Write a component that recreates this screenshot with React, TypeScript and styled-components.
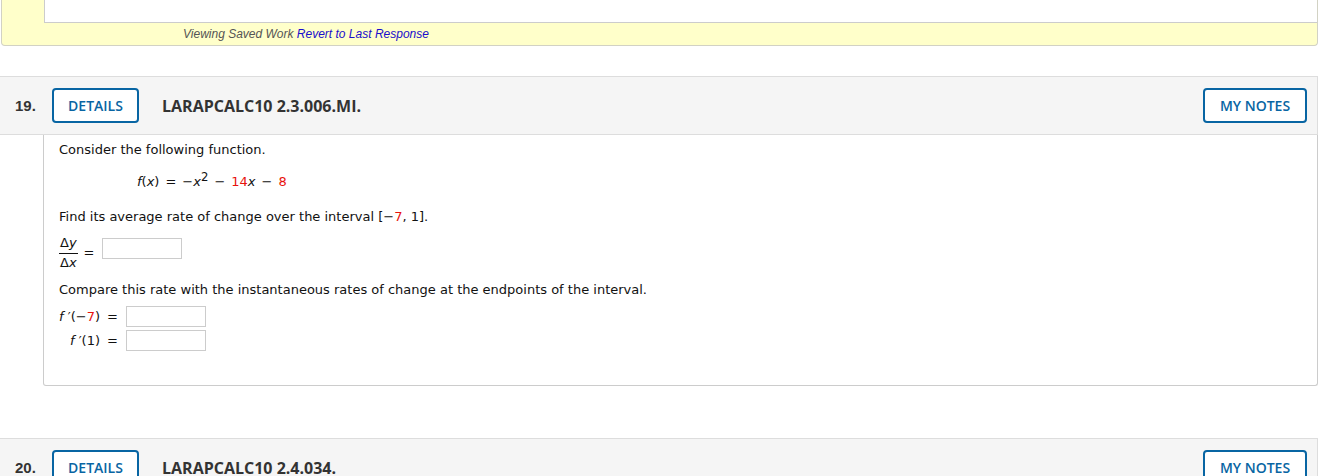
import styled, {createGlobalStyle} from "styled-components";

const GlobalStyle = createGlobalStyle`
body {
    margin: 0;
    background: #fff;
    font-family: "Open Sans", "Liberation Sans", sans-serif;
}
`;

const Page = styled.div`
    width: 1318px;
`;

const SavedPanel = styled.div`
    margin-left: 1px;
    background: #ffffca;
    border: 1px solid #d2d2c4;
    border-top: none;
    border-radius: 0 0 4px 4px;
`;

const AnswerBox = styled.div`
    margin-left: 42px;
    height: 22px;
    background: #fff;
    border-left: 1px solid #ccc;
    border-bottom: 1px solid #ccc;
`;

const SavedNote = styled.div`
    height: 22px;
    line-height: 23px;
    padding-left: 181px;
    font-family: "Liberation Sans", Arial, sans-serif;
    font-style: italic;
    font-size: 12px;
    color: #555;
    a {
        color: #1a0dcc;
        text-decoration: none;
    }
`;

const Question = styled.section<{$gap: number}>`
    margin-top: ${p => p.$gap}px;
`;

const Header = styled.div`
    display: flex;
    align-items: center;
    height: 57px;
    padding: 0 10px 0 15px;
    background: #f5f5f5;
    border-top: 1px solid #ddd;
    border-right: 1px solid #ddd;
    border-bottom: 1px solid #ddd;
`;

const Number = styled.span`
    width: 37px;
    font-family: "Liberation Sans", Arial, sans-serif;
    font-weight: bold;
    font-size: 15px;
    color: #333;
`;

const OutlineButton = styled.button<{$w: number}>`
    width: ${p => p.$w}px;
    height: 35px;
    padding: 0;
    background: #fff;
    border: 2px solid #0865a3;
    border-radius: 4px;
    color: #0865a3;
    font-family: "Open Sans", sans-serif;
    font-weight: 600;
    font-size: 14px;
    cursor: pointer;
`;

const Title = styled.span`
    margin-left: 23px;
    flex: 1;
    font-family: "Open Sans", sans-serif;
    font-weight: 700;
    font-size: 16px;
    color: #333;
`;

const Body = styled.div`
    margin-left: 43px;
    padding: 6px 15px 34px;
    border-left: 1px solid #ccc;
    border-right: 1px solid #ccc;
    border-bottom: 1px solid #ccc;
    border-radius: 0 0 3px 3px;
    font-family: "DejaVu Sans", Verdana, sans-serif;
    font-size: 13px;
    color: #111;
`;

const Line = styled.div<{$top?: number; $indent?: number}>`
    line-height: 18px;
    margin-top: ${p => p.$top ?? 0}px;
    padding-left: ${p => p.$indent ?? 0}px;
`;

const Red = styled.span`
    color: #e8120c;
`;

const Op = styled.span`
    padding: 0 6px;
`;

const It = styled.i`
    font-style: italic;
`;

const Sup = styled.sup`
    font-size: 0.9em;
    line-height: 0;
`;

const FracRow = styled.div`
    display: flex;
    align-items: flex-start;
    margin-top: 8px;
`;

const Fraction = styled.span`
    display: inline-flex;
    flex-direction: column;
    align-items: center;
    line-height: 18px;
    span:first-child {
        border-bottom: 1px solid #111;
        padding: 0 1px 1px;
    }
`;

const Input = styled.span`
    display: inline-block;
    width: 78px;
    height: 19px;
    border: 1px solid #ccc;
    background: #fff;
`;

const FracInput = styled(Input)`
    margin-top: 4px;
`;

const FracEq = styled.span`
    padding: 0 7px 0 6px;
    margin-top: 10px;
    line-height: 18px;
`;

const EqTable = styled.div`
    display: grid;
    grid-template-columns: auto auto auto;
    justify-content: start;
    align-items: center;
    row-gap: 3px;
    margin-top: 7px;
`;

const Label = styled.span`
    text-align: right;
`;

const Eq = styled.span`
    padding: 0 8px 0 7px;
`;

function QuestionHeader({num, code}: {num: number; code: string}) {
    return <Header>
        <Number>{num}.</Number>
        <OutlineButton $w={87}>DETAILS</OutlineButton>
        <Title>{code}</Title>
        <OutlineButton $w={104}>MY NOTES</OutlineButton>
    </Header>;
}

export default function App() {
    return <Page>
        <GlobalStyle />
        <SavedPanel>
            <AnswerBox />
            <SavedNote>Viewing Saved Work <a href="#">Revert to Last Response</a></SavedNote>
        </SavedPanel>

        <Question $gap={30}>
            <QuestionHeader num={19} code="LARAPCALC10 2.3.006.MI." />
            <Body>
                <Line>Consider the following function.</Line>
                <Line $top={14} $indent={78}>
                    <It>f</It>(<It>x</It>)<Op>=</Op>−<It>x</It><Sup>2</Sup><Op>−</Op><Red>14</Red><It>x</It><Op>−</Op><Red>8</Red>
                </Line>
                <Line $top={17}>Find its average rate of change over the interval [−<Red>7</Red>, 1].</Line>
                <FracRow>
                    <Fraction><span>Δ<It>y</It></span><span>Δ<It>x</It></span></Fraction>
                    <FracEq>=</FracEq>
                    <FracInput />
                </FracRow>
                <Line $top={9}>Compare this rate with the instantaneous rates of change at the endpoints of the interval.</Line>
                <EqTable>
                    <Label><It>f</It> ′(−<Red>7</Red>)</Label><Eq>=</Eq><Input />
                    <Label><It>f</It> ′(1)</Label><Eq>=</Eq><Input />
                </EqTable>
            </Body>
        </Question>

        <Question $gap={52}>
            <QuestionHeader num={20} code="LARAPCALC10 2.4.034." />
        </Question>
    </Page>;
}
